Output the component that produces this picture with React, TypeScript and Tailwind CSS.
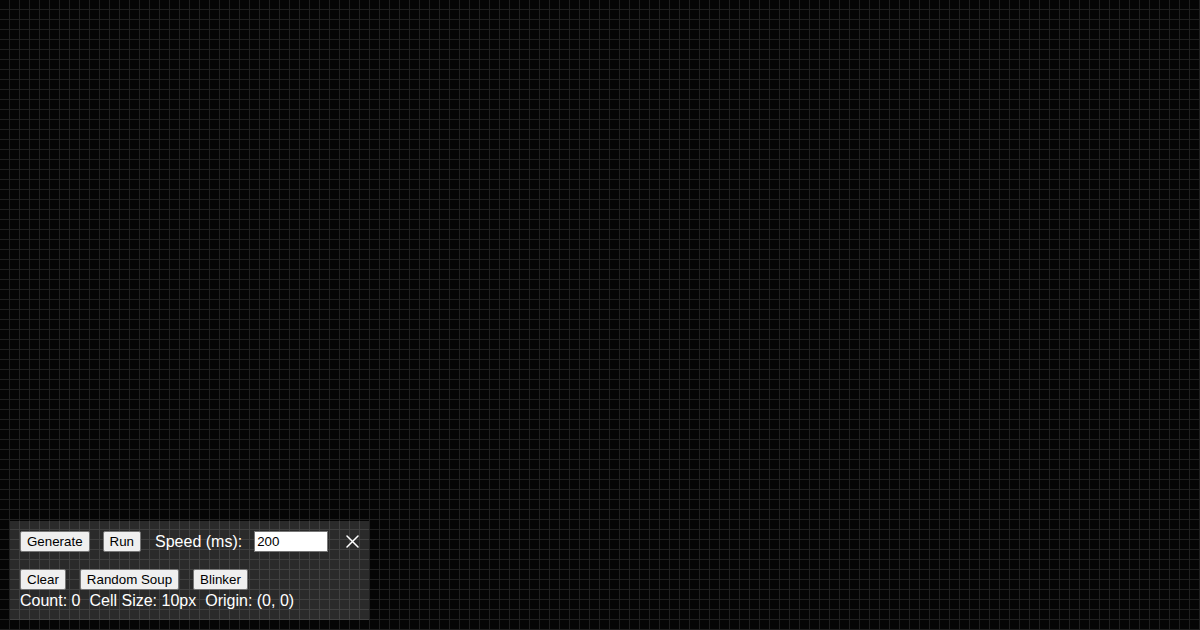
export default function App() {
  const btn =
    'shrink-0 h-[21px] px-[6px] border border-[#767676] rounded-[2px] bg-[#efefef] text-black text-[13.33px] leading-none whitespace-nowrap';

  return (
    <div
      className="relative w-full h-screen overflow-hidden bg-[#050505] bg-[linear-gradient(to_right,transparent_9px,#202020_9px),linear-gradient(to_bottom,transparent_9px,#202020_9px)] bg-[size:10px_10px]"
      style={{ fontFamily: '"Liberation Sans", Arial, sans-serif' }}
    >
      {/* Control panel */}
      <div className="absolute left-[10px] bottom-[10px] w-[359px] h-[99px] px-[10px] pt-[10px] bg-[rgba(255,255,255,0.15)] text-white">
        <div className="flex items-center h-[21px] whitespace-nowrap">
          <button className={btn}>Generate</button>
          <button className={`${btn} ml-[13px]`}>Run</button>
          <span className="shrink-0 ml-[14px] text-[16px]">Speed (ms):</span>
          <input
            defaultValue="200"
            className="shrink-0 ml-[12px] w-[74px] h-[21px] px-[2px] border border-[#767676] bg-white text-black text-[13.33px] outline-none"
          />
          <button className="shrink-0 ml-[18px] text-white" aria-label="Close">
            <svg width="13" height="13" viewBox="0 0 13 13" className="block">
              <path d="M1 1L12 12M12 1L1 12" stroke="#fff" strokeWidth="1.5" strokeLinecap="round" />
            </svg>
          </button>
        </div>

        <div className="flex items-center h-[21px] mt-[17px]">
          <button className={btn}>Clear</button>
          <button className={`${btn} ml-[14px]`}>Random Soup</button>
          <button className={`${btn} ml-[14px]`}>Blinker</button>
        </div>

        <div className="flex text-[16px] leading-[20px] mt-[1px] gap-[9px] whitespace-nowrap">
          <span>Count: 0</span>
          <span>Cell Size: 10px</span>
          <span>Origin: (0, 0)</span>
        </div>
      </div>
    </div>
  );
}
